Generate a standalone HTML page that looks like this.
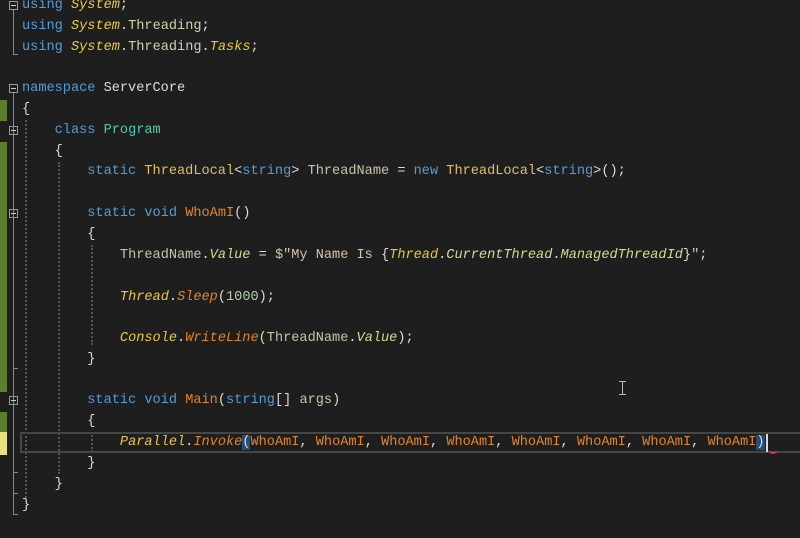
<!DOCTYPE html>
<html><head><meta charset="utf-8">
<style>
html,body{margin:0;padding:0;}
body{width:800px;height:538px;background:#1e1e1e;position:relative;overflow:hidden;font-family:"Liberation Mono","DejaVu Sans Mono",monospace;font-size:13.6px;color:#dcdcdc;}
.l{position:absolute;left:22px;height:21px;line-height:21px;white-space:pre;}
.k{color:#569cd6}.t{color:#4ec9b0}.y{color:#e8c840;font-style:italic}.yn{color:#dcc060}
.m{color:#e08428}.mi{color:#e08428;font-style:italic}.p{color:#d8d890;font-style:italic}
.f{color:#c8c4a8}.s{color:#d4c4a0}.n{color:#b5cea8}.ns{color:#c8d4a8}
.g{position:absolute;left:0;width:7px;background:#5b7f2c}
.box{position:absolute;left:9px;width:9px;height:9px;border:1px solid #999;box-sizing:border-box;}
.box:after{content:"";position:absolute;left:1px;top:3px;width:5px;height:1px;background:#ccc}
.vl{position:absolute;left:13px;width:1px;background:#888}
.hl{position:absolute;left:13px;width:5px;height:1px;background:#888}
.dg{position:absolute;width:0;border-left:2px dotted #555}
</style></head><body>
<div class="g" style="top:100px;height:21px"></div>
<div class="g" style="top:142px;height:250px"></div>
<div class="g" style="top:412px;height:20px"></div>
<div class="g" style="top:432px;height:23px;background:#e8e07a"></div>
<div class="box" style="top:1px"></div>
<div class="vl" style="top:10px;height:44px"></div><div class="hl" style="top:54px"></div>
<div class="box" style="top:84px"></div>
<div class="vl" style="top:93px;height:421px"></div><div class="hl" style="top:514px"></div>
<div class="box" style="top:126px"></div>
<div class="hl" style="top:493px"></div>
<div class="box" style="top:209px"></div>
<div class="hl" style="top:368px"></div>
<div class="box" style="top:396px"></div>
<div class="hl" style="top:472px"></div>
<div class="dg" style="left:25px;top:120px;height:378px"></div>
<div class="dg" style="left:58px;top:162px;height:312px"></div>
<div class="dg" style="left:91px;top:245px;height:100px"></div>
<div class="dg" style="left:91px;top:432px;height:20px"></div>
<div style="position:absolute;left:20px;top:432px;width:790px;height:21px;border:2px solid #464646;box-sizing:border-box"></div>

<div class="l" style="top:-5px"><span class="k">using</span> <span class="y">System</span>;</div>
<div class="l" style="top:16px"><span class="k">using</span> <span class="y">System</span>.<span class="ns">Threading</span>;</div>
<div class="l" style="top:37px"><span class="k">using</span> <span class="y">System</span>.<span class="ns">Threading</span>.<span class="y">Tasks</span>;</div>
<div class="l" style="top:78px"><span class="k">namespace</span> ServerCore</div>
<div class="l" style="top:99px">{</div>
<div class="l" style="top:120px">    <span class="k">class</span> <span class="t">Program</span></div>
<div class="l" style="top:141px">    {</div>
<div class="l" style="top:161px">        <span class="k">static</span> <span class="yn">ThreadLocal</span>&lt;<span class="k">string</span>&gt; <span class="f">ThreadName</span> = <span class="k">new</span> <span class="yn">ThreadLocal</span>&lt;<span class="k">string</span>&gt;();</div>
<div class="l" style="top:203px">        <span class="k">static</span> <span class="k">void</span> <span class="m">WhoAmI</span>()</div>
<div class="l" style="top:224px">        {</div>
<div class="l" style="top:245px">            <span class="f">ThreadName</span>.<span class="p">Value</span> = <span class="s">$"My Name Is </span>{<span class="y">Thread</span>.<span class="p">CurrentThread</span>.<span class="p">ManagedThreadId</span>}<span class="s">"</span>;</div>
<div class="l" style="top:287px">            <span class="y">Thread</span>.<span class="mi">Sleep</span>(<span class="n">1000</span>);</div>
<div class="l" style="top:328px">            <span class="y">Console</span>.<span class="mi">WriteLine</span>(<span class="f">ThreadName</span>.<span class="p">Value</span>);</div>
<div class="l" style="top:349px">        }</div>
<div class="l" style="top:390px">        <span class="k">static</span> <span class="k">void</span> <span class="m">Main</span>(<span class="k">string</span>[] <span class="f">args</span>)</div>
<div class="l" style="top:411px">        {</div>
<div class="l" style="top:432px">            <span class="y">Parallel</span>.<span class="mi">Invoke</span><span style="background:#264f78">(</span><span class="m">WhoAmI</span>, <span class="m">WhoAmI</span>, <span class="m">WhoAmI</span>, <span class="m">WhoAmI</span>, <span class="m">WhoAmI</span>, <span class="m">WhoAmI</span>, <span class="m">WhoAmI</span>, <span class="m">WhoAmI</span><span style="background:#264f78">)</span></div>
<div class="l" style="top:453px">        }</div>
<div class="l" style="top:474px">    }</div>
<div class="l" style="top:495px">}</div>
<div style="position:absolute;left:766px;top:434px;width:2px;height:18px;background:#dcdcdc"></div>
<div style="position:absolute;left:769px;top:449px;width:8px;height:3px;border-bottom:2px solid #d04040;border-radius:0 0 4px 4px"></div>
<div style="position:absolute;left:622px;top:381px;width:1px;height:14px;background:#bbb"></div>
<div style="position:absolute;left:619px;top:381px;width:7px;height:1px;background:#bbb"></div>
<div style="position:absolute;left:619px;top:394px;width:7px;height:1px;background:#bbb"></div>
</body></html>
